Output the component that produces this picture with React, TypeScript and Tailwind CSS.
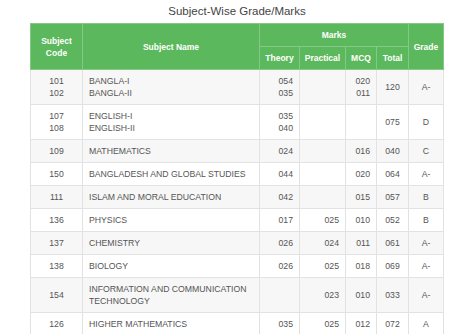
const rows: { code: string[]; name: string[]; theory: string[]; practical: string; mcq: string[]; total: string; grade: string }[] = [
  { code: ['101', '102'], name: ['BANGLA-I', 'BANGLA-II'], theory: ['054', '035'], practical: '', mcq: ['020', '011'], total: '120', grade: 'A-' },
  { code: ['107', '108'], name: ['ENGLISH-I', 'ENGLISH-II'], theory: ['035', '040'], practical: '', mcq: [], total: '075', grade: 'D' },
  { code: ['109'], name: ['MATHEMATICS'], theory: ['024'], practical: '', mcq: ['016'], total: '040', grade: 'C' },
  { code: ['150'], name: ['BANGLADESH AND GLOBAL STUDIES'], theory: ['044'], practical: '', mcq: ['020'], total: '064', grade: 'A-' },
  { code: ['111'], name: ['ISLAM AND MORAL EDUCATION'], theory: ['042'], practical: '', mcq: ['015'], total: '057', grade: 'B' },
  { code: ['136'], name: ['PHYSICS'], theory: ['017'], practical: '025', mcq: ['010'], total: '052', grade: 'B' },
  { code: ['137'], name: ['CHEMISTRY'], theory: ['026'], practical: '024', mcq: ['011'], total: '061', grade: 'A-' },
  { code: ['138'], name: ['BIOLOGY'], theory: ['026'], practical: '025', mcq: ['018'], total: '069', grade: 'A-' },
  { code: ['154'], name: ['INFORMATION AND COMMUNICATION', 'TECHNOLOGY'], theory: [], practical: '023', mcq: ['010'], total: '033', grade: 'A-' },
  { code: ['126'], name: ['HIGHER MATHEMATICS'], theory: ['035'], practical: '025', mcq: ['012'], total: '072', grade: 'A' },
];

function Lines({ items }: { items: string[] }) {
  return (
    <>
      {items.map((t, i) => (
        <div key={i}>{t}</div>
      ))}
    </>
  );
}

export default function App() {
  const th = 'border border-[#86c986] px-1 py-[5px] text-[8.5px] leading-[12px] font-bold text-white text-center align-middle';
  const td = 'border border-[#e2e2e2] px-[6px] py-[5px] align-middle';

  return (
    <div className="w-[474px] h-[334px] overflow-hidden bg-white font-['Liberation_Sans',Arial,sans-serif]">
      <h2 className="h-[23px] pt-[2px] text-center text-[11.5px] leading-[18px] text-[#444]">Subject-Wise Grade/Marks</h2>
      <div className="flex justify-center">
        <table className="w-[413px] table-fixed border-collapse text-[8.7px] leading-[12px] text-[#555]">
          <colgroup>
            <col className="w-[52px]" />
            <col className="w-[177px]" />
            <col className="w-[40px]" />
            <col className="w-[46px]" />
            <col className="w-[31px]" />
            <col className="w-[32px]" />
            <col className="w-[35px]" />
          </colgroup>
          <thead className="bg-[#5cb85c]">
            <tr className="h-[22px]">
              <th rowSpan={2} className={th}>Subject<br />Code</th>
              <th rowSpan={2} className={th}>Subject Name</th>
              <th colSpan={4} className={th}>Marks</th>
              <th rowSpan={2} className={th}>Grade</th>
            </tr>
            <tr className="h-[23px]">
              <th className={th}>Theory</th>
              <th className={th}>Practical</th>
              <th className={th}>MCQ</th>
              <th className={th}>Total</th>
            </tr>
          </thead>
          <tbody>
            {rows.map((r, i) => (
              <tr key={i} className={i % 2 === 0 ? 'bg-[#f7f7f7]' : 'bg-white'}>
                <td className={`${td} text-center`}><Lines items={r.code} /></td>
                <td className={`${td} text-left`}><Lines items={r.name} /></td>
                <td className={`${td} text-right`}><Lines items={r.theory} /></td>
                <td className={`${td} text-right`}>{r.practical}</td>
                <td className={`${td} text-right`}><Lines items={r.mcq} /></td>
                <td className={`${td} text-center`}>{r.total}</td>
                <td className={`${td} text-center`}>{r.grade}</td>
              </tr>
            ))}
          </tbody>
        </table>
      </div>
    </div>
  );
}
